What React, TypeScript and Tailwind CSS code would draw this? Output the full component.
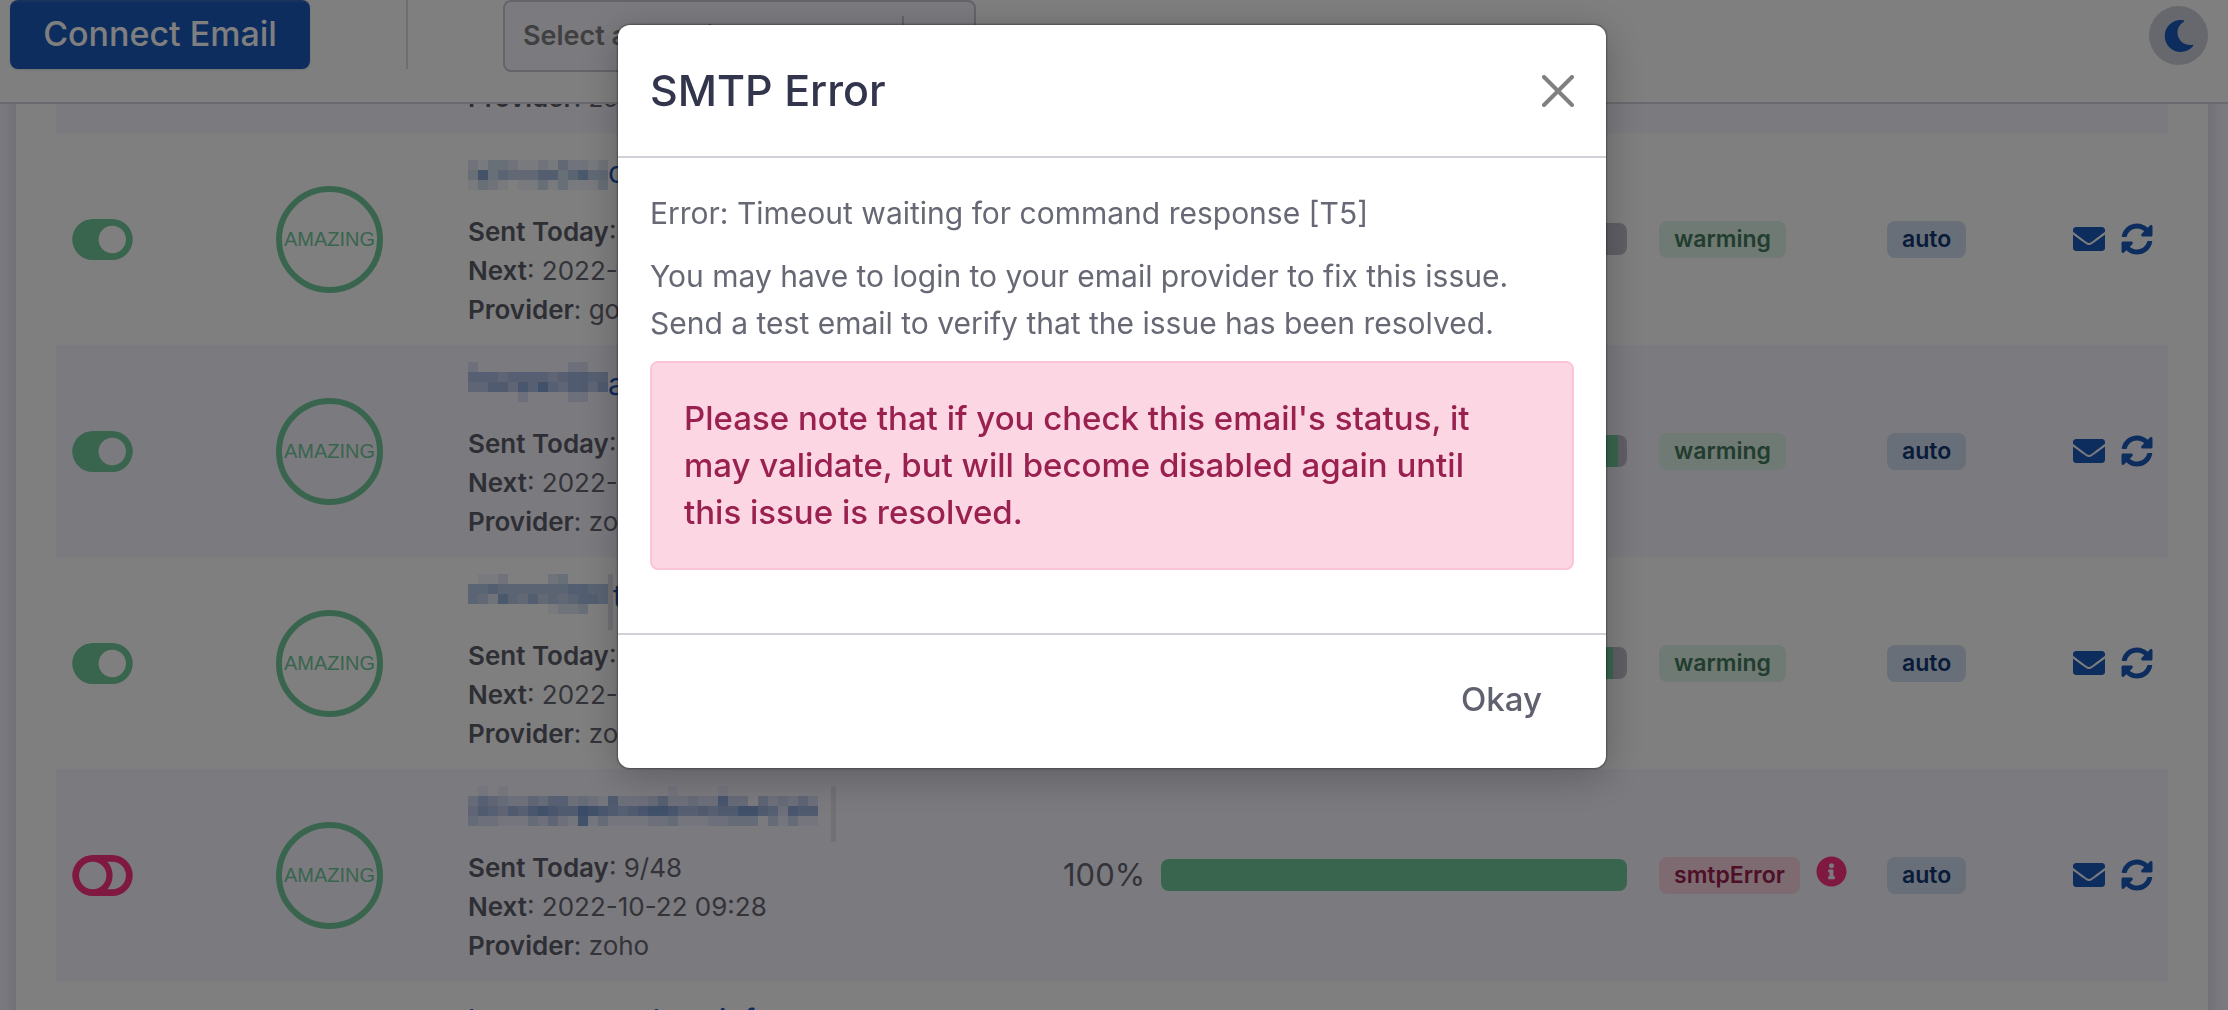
import React, { useState } from 'react';
import { FaEnvelope, FaInfoCircle, FaMoon, FaSyncAlt } from 'react-icons/fa';

type Account = {
    id: number,
    enabled: boolean,
    mask: string[],
    tail: string,
    divider: boolean,
    sent: string,
    next: string,
    provider: string,
    progress: number,
    status: 'warming' | 'smtpError'
};

// one digit per mosaic cell, 0 = empty, 9 = darkest
const ACCOUNTS: Account[] = [
    { id: 1, enabled: true, mask: [], tail: 'harper@weare.co', divider: false, sent: '12/48', next: '2022-10-22 09:12', provider: 'zoho', progress: 100, status: 'warming' },
    { id: 2, enabled: true, mask: ['', '21332112142212', '38354446635744', '13210113131113'], tail: 'co', divider: false, sent: '14/48', next: '2022-10-22 09:20', provider: 'google', progress: 82, status: 'warming' },
    { id: 3, enabled: true, mask: ['20000000002200', '55545555456655', '44664758546646', '00000200002200'], tail: 'a.co', divider: false, sent: '11/48', next: '2022-10-22 09:31', provider: 'zoho', progress: 98, status: 'warming' },
    { id: 4, enabled: true, mask: ['01120000230000', '55655555556655', '54275464545665', '00000000122300'], tail: 't.io', divider: true, sent: '10/48', next: '2022-10-22 09:25', provider: 'zoho', progress: 97, status: 'warming' },
    { id: 5, enabled: false, mask: ['01010000000000000000100001000000000', '35432243552321622235223227330423242', '46546578766987656788755656688652766', '32211132421813111122311122333031311'], tail: '', divider: true, sent: '9/48', next: '2022-10-22 09:28', provider: 'zoho', progress: 100, status: 'smtpError' },
    { id: 6, enabled: true, mask: [], tail: 'harper@sendnewinfo.co', divider: false, sent: '9/48', next: '2022-10-22 09:40', provider: 'zoho', progress: 100, status: 'warming' },
];

const MaskedEmail = ({ mask }: { mask: string[] }) => {
    if (!mask.length) return null;
    const width = mask[1].length * 10;
    return (
        <svg width={width} height={40} viewBox={`0 0 ${width} 40`} shapeRendering="crispEdges" fill="#1a56ae" aria-hidden="true">
            {mask.flatMap((line, y) =>
                line.split('').map((level, x) => (
                    <rect key={`${x}-${y}`} x={x * 10} y={y * 10} width="10" height="10" opacity={Number(level) * 0.065} />
                ))
            )}
        </svg>
    );
};

const Toggle = ({ enabled }: { enabled: boolean }) => {
    const [on, setOn] = useState(enabled);
    return (
        <label className={`relative inline-block cursor-pointer align-middle ${on ? 'text-[#72cb9c]' : 'text-[#ff3383]'}`}>
            <input type="checkbox" className="sr-only" checked={on} onChange={() => setOn(!on)} aria-label="Warming enabled" />
            <svg width="61" height="41" viewBox="0 0 62 42" fill="currentColor" fillRule="evenodd">
                {on ? (
                    <path d="M21 0H41A21 21 0 0 1 41 42H21A21 21 0 0 1 21 0ZM41 7A14 14 0 0 0 41 35A14 14 0 0 0 41 7Z" />
                ) : (
                    <path d="M21 0H41A21 21 0 0 1 41 42H21A21 21 0 0 1 21 0ZM21 7A14 14 0 0 0 21 35A14 14 0 0 0 21 7ZM36 7A21 21 0 0 1 36 35H41A14 14 0 0 0 41 7Z" />
                )}
            </svg>
        </label>
    );
};

const Badge = ({ children, className }: { children: React.ReactNode, className: string }) => (
    <span className={`inline-flex h-[37px] items-center rounded-lg px-[15px] text-[23px] font-semibold ${className}`}>{children}</span>
);

const Header = () => (
    <header className="relative z-10 flex h-[104px] shrink-0 items-start justify-between border-b-2 border-[#d4d4dc] bg-white pl-[10px] pr-5">
        <div className="flex items-start">
            <button className="h-[69px] w-[300px] rounded-lg border-t-2 border-[#3168bd] bg-[#1a5abc] pb-1 text-[34px] font-medium text-white shadow-sm">Connect Email</button>
            <div className="ml-24 h-[69px] w-[2px] bg-[#dcdce4]" />
            <div className="relative ml-[95px] h-[72px] w-[473px]">
                <select aria-label="Email" className="h-full w-full appearance-none rounded-lg border-2 border-[#c8c8d2] bg-[#f7f5ff] px-[18px] text-[27px] font-semibold text-[#808080]">
                    <option>Select an email</option>
                </select>
                <div className="pointer-events-none absolute bottom-4 right-[72px] top-4 w-[2px] bg-[#c8c8d2]" />
            </div>
        </div>
        <button aria-label="Dark mode" className="mt-[6px] flex size-[59px] items-center justify-center rounded-full bg-[#cfd1da] text-[#1a5abc]">
            <FaMoon size={32} />
        </button>
    </header>
);

const AccountRow = ({ account, onInfo }: { account: Account, onInfo: () => void }) => (
    <tr className="h-[212px] odd:bg-[#f7f5ff]">
        <td className="px-4"><Toggle enabled={account.enabled} /></td>
        <td className="px-4">
            <div className="flex size-[107px] items-center justify-center rounded-full border-[6px] border-[#72cb9c] font-['Liberation_Sans',sans-serif] text-xl text-[#72cb9c]">AMAZING</div>
        </td>
        <td className="px-4 text-[26px] leading-[39px]">
            <div className="mb-[6px] flex h-14 items-start">
                <MaskedEmail mask={account.mask} />
                {account.divider && <div className={`h-14 w-[5px] bg-[#e2e1e8] ${account.enabled ? '' : 'ml-[13px]'}`} />}
                {account.tail && <a href="#" className="text-[30px] leading-[44px] text-[#1a5abc]">{account.tail}</a>}
            </div>
            <p><b className="font-semibold text-[#5c5e6b]">Sent Today</b>: {account.sent}</p>
            <p><b className="font-semibold text-[#5c5e6b]">Next</b>: {account.next}</p>
            <p><b className="font-semibold text-[#5c5e6b]">Provider</b>: {account.provider}</p>
        </td>
        <td className="px-4">
            <div className="flex items-center gap-4">
                <span className="w-[82px] text-right text-[31px]">{account.progress}%</span>
                <div className="h-8 flex-1 overflow-hidden rounded-lg bg-[#bebecb]">
                    <div className="h-full bg-[#72cb9c]" style={{ width: `${account.progress}%` }} />
                </div>
            </div>
        </td>
        <td className="px-4">
            {account.status === 'warming' ? (
                <Badge className="bg-[#dcf5e7] text-[#447a5d]">warming</Badge>
            ) : (
                <div className="flex items-center gap-4">
                    <Badge className="bg-[#fdd6e3] text-[#99204f]">smtpError</Badge>
                    <button aria-label="Show error" onClick={onInfo} className="mb-2 text-[#ff3383]"><FaInfoCircle size={31} /></button>
                </div>
            )}
        </td>
        <td className="px-4"><Badge className="bg-[#d1def2] text-[#103671]">auto</Badge></td>
        <td className="px-4">
            <div className="flex gap-4 text-[#1a5abc]">
                <button aria-label="Send test email"><FaEnvelope size={32} /></button>
                <button aria-label="Check status"><FaSyncAlt size={32} /></button>
            </div>
        </td>
    </tr>
);

const SmtpErrorModal = ({ onClose }: { onClose: () => void }) => (
    <div className="fixed inset-0 z-50 flex items-start justify-center bg-black/50 pr-1 pt-[25px]">
        <div role="dialog" aria-labelledby="modal-title" className="w-full max-w-[988px] rounded-xl bg-white text-[30px] leading-[47px] shadow-[0_8px_40px_rgba(0,0,0,0.25),0_0_2px_1px_rgba(0,0,0,0.35)]">
            <div className="flex h-[133px] items-center justify-between border-b-2 border-[#d0d0da] px-8">
                <h2 id="modal-title" className="text-[43px] font-medium text-[#33354d]">SMTP Error</h2>
                <button aria-label="Close" onClick={onClose} className="text-[#808080]">
                    <svg width="32" height="32" viewBox="0 0 32 32" stroke="currentColor" strokeWidth="4" strokeLinecap="round"><path d="M2 2L30 30M30 2L2 30" /></svg>
                </button>
            </div>
            <div className="px-8 pb-[63px] pt-8 text-[#666874]">
                <p className="mb-4">Error: Timeout waiting for command response [T5]</p>
                <p className="mb-[14px]">You may have to login to your email provider to fix this issue. Send a test email to verify that the issue has been resolved.</p>
                <div className="rounded-lg border-2 border-[#fbc4d8] bg-[#fdd6e3] py-8 pl-8 pr-14 text-[33px] font-medium text-[#99204f]">
                    Please note that if you check this email's status, it may validate, but will become disabled again until this issue is resolved.
                </div>
            </div>
            <div className="flex h-[135px] items-center justify-end border-t-2 border-[#d0d0da] px-8 pb-1">
                <button onClick={onClose} className="px-8 py-2 text-[33px] font-medium text-[#5f616e]">Okay</button>
            </div>
        </div>
    </div>
);

const App = () => {
    const [showError, setShowError] = useState(true);

    return (
        <div className="flex h-screen flex-col overflow-hidden bg-[#f7f5ff] font-['Inter',sans-serif] text-[#666874]">
            <Header />
            <main className="min-h-0 flex-1 overflow-hidden pl-4 pr-5">
                {/* list is scrolled past its first row */}
                <div className="-mt-[183px] bg-white px-10 shadow-[0_0_20px_rgba(60,60,90,0.2)]">
                    <table className="w-full table-fixed text-left">
                        <colgroup>
                            <col className="w-[204px]" />
                            <col className="w-[192px]" />
                            <col />
                            <col className="w-[596px]" />
                            <col className="w-[228px]" />
                            <col className="w-[186px]" />
                            <col className="w-[111px]" />
                        </colgroup>
                        <tbody>
                            {ACCOUNTS.map((account) => (
                                <AccountRow key={account.id} account={account} onInfo={() => setShowError(true)} />
                            ))}
                        </tbody>
                    </table>
                </div>
            </main>
            {showError && <SmtpErrorModal onClose={() => setShowError(false)} />}
        </div>
    );
};

export default App;
